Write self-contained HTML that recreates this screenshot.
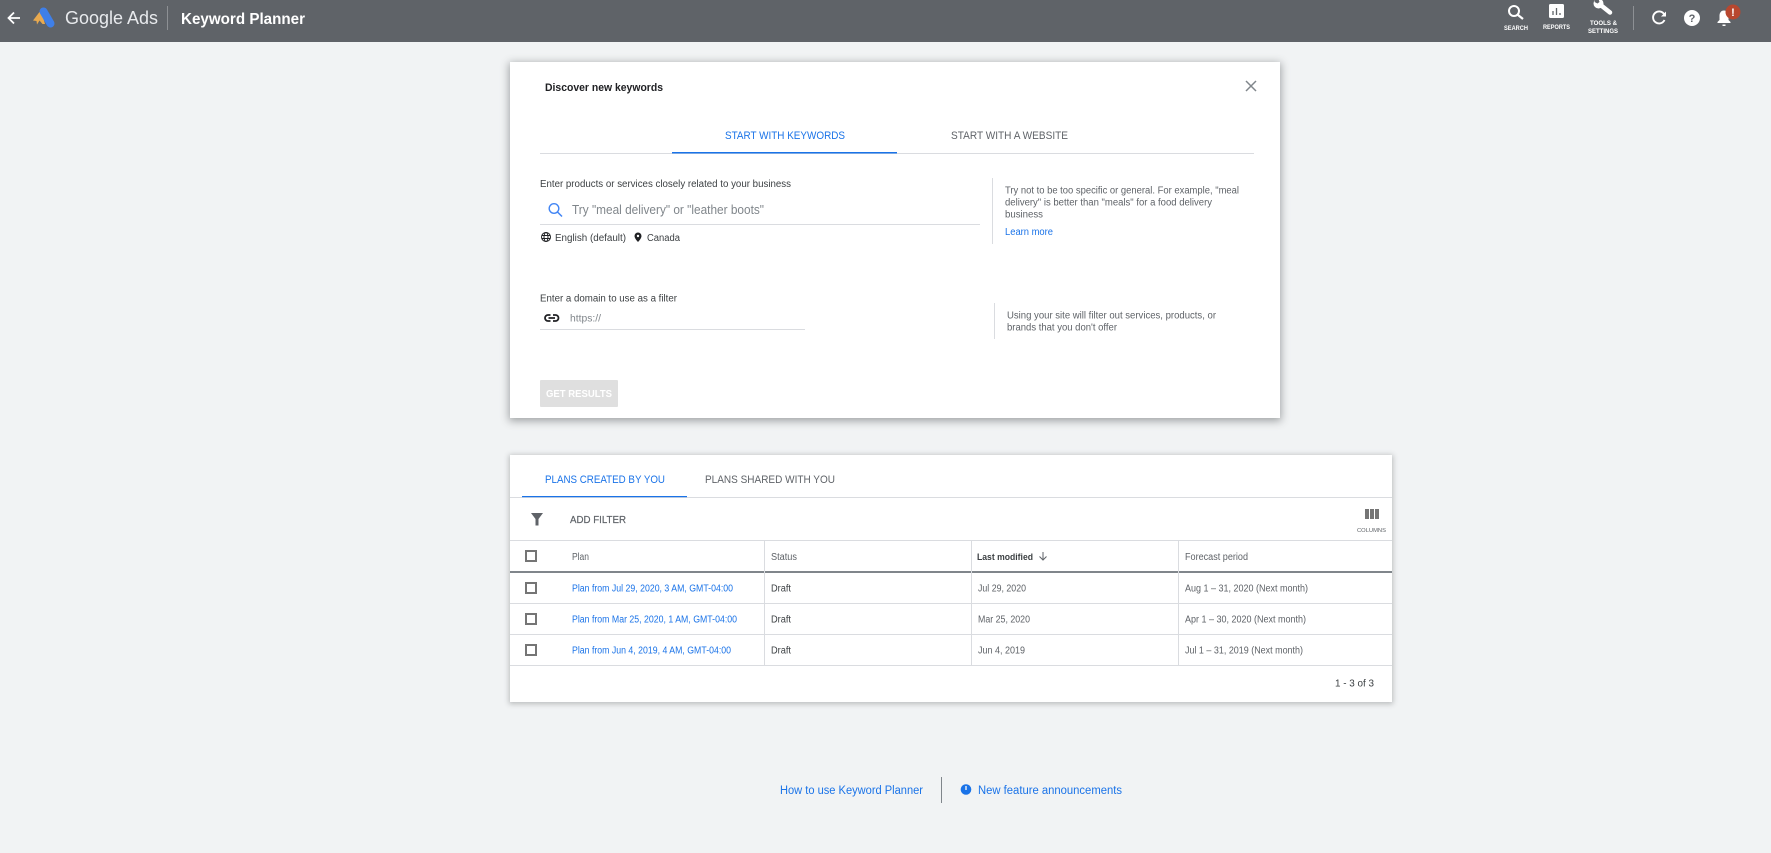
<!DOCTYPE html>
<html lang="en"><head><meta charset="utf-8"><title>Keyword Planner</title>
<style>
html,body{margin:0;padding:0;width:1771px;height:853px;overflow:hidden;background:#f1f3f4}
.hd{position:absolute;left:0;top:0;width:1771px;height:42px;background:#5f6368}
.card{position:absolute;background:#fff}
#c1{left:510px;top:62px;width:770px;height:356px;box-shadow:0 2px 8px 1px rgba(60,64,67,.45)}
#c2{left:510px;top:455px;width:882px;height:247px;box-shadow:0 1px 5px 1px rgba(60,64,67,.3)}
svg{position:absolute;left:0;top:0;filter:blur(.3px)}
text{font-family:"Liberation Sans",Arial,sans-serif;font-size:10px;fill:#3c4043}
.l{fill:#1a73e8}.g{fill:#5f6368}.w{fill:#fff}
</style></head><body>
<div class="hd"></div><div class="card" id="c1"></div><div class="card" id="c2"></div>
<svg width="1771" height="853" viewBox="0 0 1771 853" xmlns="http://www.w3.org/2000/svg">
<!-- header -->
<path d="M20 18H9M14 12.500L8.500 18 14 23.500" fill="none" stroke="#fff" stroke-width="1.800"/>
<path d="M33 20.500 41 10 45 24 42.500 24 39.500 20.500 37 24.500 36.500 21z" fill="#e8a94f"/>
<path d="M43.500 11.500 50.500 23.500" stroke="#3f7fe8" stroke-width="8" stroke-linecap="round"/>
<text x="65" y="24" class="w" textLength="93" lengthAdjust="spacingAndGlyphs" style="font-size:18.500px;fill:#e8eaed">Google Ads</text>
<rect x="167" y="6" width="1" height="24" fill="#8d9094"/>
<text x="181" y="24" class="w" textLength="124" lengthAdjust="spacingAndGlyphs" style="font-size:16px;font-weight:700">Keyword Planner</text>

<circle cx="1514" cy="11" r="5" fill="none" stroke="#fff" stroke-width="2"/><path d="M1518 15l5 4" stroke="#fff" stroke-width="2.200"/>
<text x="1504" y="30" class="w" textLength="24" lengthAdjust="spacingAndGlyphs" style="font-size:6px;font-weight:700">SEARCH</text>
<rect x="1549" y="4" width="15" height="14" rx="1.500" fill="#fff"/><path d="M1553 15v-4M1556.500 15V8M1560 15v-2" stroke="#5f6368" stroke-width="1.300"/>
<text x="1543" y="29" class="w" textLength="27" lengthAdjust="spacingAndGlyphs" style="font-size:6px;font-weight:700">REPORTS</text>
<circle cx="1598.500" cy="3.500" r="5" fill="#fff"/>
<path d="M1600 4.500 1610 12.500" stroke="#fff" stroke-width="4.500" stroke-linecap="round"/>
<path d="M1595 -1l3.500 0 1 3-2 1.500-3-1.500z" fill="#5f6368"/>
<text x="1590" y="25" class="w" textLength="27" lengthAdjust="spacingAndGlyphs" style="font-size:6px;font-weight:700">TOOLS &amp;</text>
<text x="1588" y="33" class="w" textLength="30" lengthAdjust="spacingAndGlyphs" style="font-size:6px;font-weight:700">SETTINGS</text>
<rect x="1633" y="6" width="1" height="24" fill="#8d9094"/>
<path d="M1664.500 20a6 6 0 1 1-.500-6" fill="none" stroke="#fff" stroke-width="1.900"/><path d="M1666 11.500v5h-5z" fill="#fff"/>
<circle cx="1692" cy="18" r="8" fill="#fff"/>
<text x="1692" y="22" text-anchor="middle" style="font-size:11px;font-weight:700;fill:#5f6368">?</text>
<path d="M1724 10.500c-3 0-4.500 2.500-4.500 5v4.500l-2 2v1h13v-1l-2-2v-4.500c0-2.500-1.500-5-4.500-5zM1722.500 24.500h3v1.500h-3z" fill="#fff"/>
<circle cx="1733" cy="12" r="7.500" fill="#b8472f"/>
<text x="1733" y="16" text-anchor="middle" class="w" style="font-size:11px;font-weight:700">!</text>

<!-- card 1 -->
<text x="545" y="91" textLength="118" lengthAdjust="spacingAndGlyphs" style="font-size:11px;font-weight:700;fill:#202124">Discover new keywords</text>
<path d="M1246 81l10 10M1256 81l-10 10" stroke="#80868b" stroke-width="1.500"/>
<rect x="540" y="153" width="714" height="1" fill="#dadce0"/>
<rect x="672" y="152" width="225" height="1.500" fill="#1a73e8"/>
<text x="725" y="139" class="l" textLength="120" lengthAdjust="spacingAndGlyphs" style="font-size:11px">START WITH KEYWORDS</text>
<text x="951" y="139" class="g" textLength="117" lengthAdjust="spacingAndGlyphs" style="font-size:11px">START WITH A WEBSITE</text>
<text x="540" y="187" textLength="251" lengthAdjust="spacingAndGlyphs" style="font-size:10px">Enter products or services closely related to your business</text>
<circle cx="554" cy="208.500" r="4.800" fill="none" stroke="#4285f4" stroke-width="1.400"/><path d="M557.500 212l4.500 4.500" stroke="#4285f4" stroke-width="1.500"/>
<text x="572" y="214" textLength="192" lengthAdjust="spacingAndGlyphs" style="font-size:13px;fill:#80868b">Try "meal delivery" or "leather boots"</text>
<rect x="540" y="224" width="440" height="1" fill="#dadce0"/>
<g fill="none" stroke="#202124" stroke-width="1"><circle cx="546" cy="237" r="4.500"/><ellipse cx="546" cy="237" rx="2" ry="4.500"/><path d="M541.500 235.500h9M541.500 238.500h9"/></g>
<text x="555" y="241" textLength="71" lengthAdjust="spacingAndGlyphs" style="font-size:10px">English (default)</text>
<path d="M638 232.500a3.500 3.500 0 0 0-3.500 3.500c0 2.500 3.500 6 3.500 6s3.500-3.500 3.500-6a3.500 3.500 0 0 0-3.500-3.500z" fill="#202124"/><circle cx="638" cy="236" r="1.200" fill="#fff"/>
<text x="647" y="241" textLength="33" lengthAdjust="spacingAndGlyphs" style="font-size:10px">Canada</text>
<rect x="992" y="178" width="1" height="66" fill="#dadce0"/>
<text x="1005" y="193.500" class="g" textLength="234" lengthAdjust="spacingAndGlyphs" style="font-size:10px">Try not to be too specific or general. For example, "meal</text>
<text x="1005" y="205.500" class="g" textLength="207" lengthAdjust="spacingAndGlyphs" style="font-size:10px">delivery" is better than "meals" for a food delivery</text>
<text x="1005" y="217.500" class="g" textLength="38" lengthAdjust="spacingAndGlyphs" style="font-size:10px">business</text>
<text x="1005" y="235" class="l" textLength="48" lengthAdjust="spacingAndGlyphs" style="font-size:10px">Learn more</text>

<text x="540" y="301.500" textLength="137" lengthAdjust="spacingAndGlyphs" style="font-size:10px">Enter a domain to use as a filter</text>
<path d="M550.500 315h-2.500a3 3 0 0 0 0 6h2.500M553 315h2.500a3 3 0 0 1 0 6H553M548.500 318h6.500" fill="none" stroke="#202124" stroke-width="1.800"/>
<text x="570" y="321.500" textLength="31" lengthAdjust="spacingAndGlyphs" style="font-size:10px;fill:#80868b">https://</text>
<rect x="540" y="329" width="265" height="1" fill="#dadce0"/>
<rect x="994" y="303" width="1" height="36" fill="#dadce0"/>
<text x="1007" y="318.500" class="g" textLength="209" lengthAdjust="spacingAndGlyphs" style="font-size:10px">Using your site will filter out services, products, or</text>
<text x="1007" y="330.500" class="g" textLength="110" lengthAdjust="spacingAndGlyphs" style="font-size:10px">brands that you don't offer</text>
<rect x="540" y="380" width="78" height="27" rx="1" fill="#dfdfdf"/>
<text x="546" y="397" class="w" textLength="66" lengthAdjust="spacingAndGlyphs" style="font-size:10.500px;font-weight:700">GET RESULTS</text>

<!-- card 2 -->
<text x="545" y="483" class="l" textLength="120" lengthAdjust="spacingAndGlyphs" style="font-size:11px">PLANS CREATED BY YOU</text>
<text x="705" y="483" class="g" textLength="130" lengthAdjust="spacingAndGlyphs" style="font-size:11px">PLANS SHARED WITH YOU</text>
<rect x="510" y="497" width="882" height="1" fill="#dadce0"/>
<rect x="522" y="496" width="165" height="1.200" fill="#1a73e8"/>
<path d="M531 513h12l-4.500 6v6.500h-3V519z" fill="#5f6368"/>
<text x="570" y="523" class="g" textLength="56" lengthAdjust="spacingAndGlyphs" style="font-size:10.500px;stroke:#5f6368;stroke-width:.2px">ADD FILTER</text>
<path d="M1365 509h4v10h-4zM1370 509h4v10h-4zM1375 509h4v10h-4z" fill="#757575"/>
<text x="1357" y="532" textLength="29" lengthAdjust="spacingAndGlyphs" style="font-size:5.500px;fill:#5f6368">COLUMNS</text>
<rect x="510" y="540" width="882" height="1" fill="#dadce0"/>
<rect x="510" y="571" width="882" height="2" fill="#80868b"/>
<rect x="510" y="603" width="882" height="1" fill="#dadce0"/>
<rect x="510" y="634" width="882" height="1" fill="#dadce0"/>
<rect x="510" y="665" width="882" height="1" fill="#dadce0"/>
<path d="M764.500 541v124M971.500 541v124M1178.500 541v124" stroke="#dadce0" stroke-width="1"/>
<g fill="none" stroke="#757575" stroke-width="2">
<rect x="526" y="551" width="10" height="10"/><rect x="526" y="583" width="10" height="10"/><rect x="526" y="614" width="10" height="10"/><rect x="526" y="645" width="10" height="10"/>
</g>
<text x="572" y="560" class="g" textLength="17" lengthAdjust="spacingAndGlyphs">Plan</text>
<text x="771" y="560" class="g" textLength="26" lengthAdjust="spacingAndGlyphs">Status</text>
<text x="977" y="560" textLength="56" lengthAdjust="spacingAndGlyphs" style="font-weight:700;font-size:9.500px;fill:#3c4043">Last modified</text>
<path d="M1043 552v8M1039.500 556.500l3.500 3.500 3.500-3.500" fill="none" stroke="#5f6368" stroke-width="1"/>
<text x="1185" y="560" class="g" textLength="63" lengthAdjust="spacingAndGlyphs">Forecast period</text>

<text x="572" y="591.500" class="l" textLength="161" lengthAdjust="spacingAndGlyphs">Plan from Jul 29, 2020, 3 AM, GMT-04:00</text>
<text x="771" y="591.500" textLength="20" lengthAdjust="spacingAndGlyphs">Draft</text>
<text x="978" y="591.500" class="g" textLength="48" lengthAdjust="spacingAndGlyphs">Jul 29, 2020</text>
<text x="1185" y="591.500" class="g" textLength="123" lengthAdjust="spacingAndGlyphs">Aug 1 – 31, 2020 (Next month)</text>

<text x="572" y="622.500" class="l" textLength="165" lengthAdjust="spacingAndGlyphs">Plan from Mar 25, 2020, 1 AM, GMT-04:00</text>
<text x="771" y="622.500" textLength="20" lengthAdjust="spacingAndGlyphs">Draft</text>
<text x="978" y="622.500" class="g" textLength="52" lengthAdjust="spacingAndGlyphs">Mar 25, 2020</text>
<text x="1185" y="622.500" class="g" textLength="121" lengthAdjust="spacingAndGlyphs">Apr 1 – 30, 2020 (Next month)</text>

<text x="572" y="653.500" class="l" textLength="159" lengthAdjust="spacingAndGlyphs">Plan from Jun 4, 2019, 4 AM, GMT-04:00</text>
<text x="771" y="653.500" textLength="20" lengthAdjust="spacingAndGlyphs">Draft</text>
<text x="978" y="653.500" class="g" textLength="47" lengthAdjust="spacingAndGlyphs">Jun 4, 2019</text>
<text x="1185" y="653.500" class="g" textLength="118" lengthAdjust="spacingAndGlyphs">Jul 1 – 31, 2019 (Next month)</text>
<text x="1335" y="686.500" textLength="39" lengthAdjust="spacingAndGlyphs">1 - 3 of 3</text>

<!-- footer -->
<text x="780" y="794" class="l" textLength="143" lengthAdjust="spacingAndGlyphs" style="font-size:11.500px">How to use Keyword Planner</text>
<rect x="941" y="777" width="1" height="26" fill="#80868b"/>
<circle cx="966" cy="789.500" r="5.300" fill="#1a73e8"/><rect x="965.300" y="786" width="1.400" height="4" fill="#f1f3f4"/>
<text x="978" y="794" class="l" textLength="144" lengthAdjust="spacingAndGlyphs" style="font-size:11.500px">New feature announcements</text>
</svg>
</body></html>
